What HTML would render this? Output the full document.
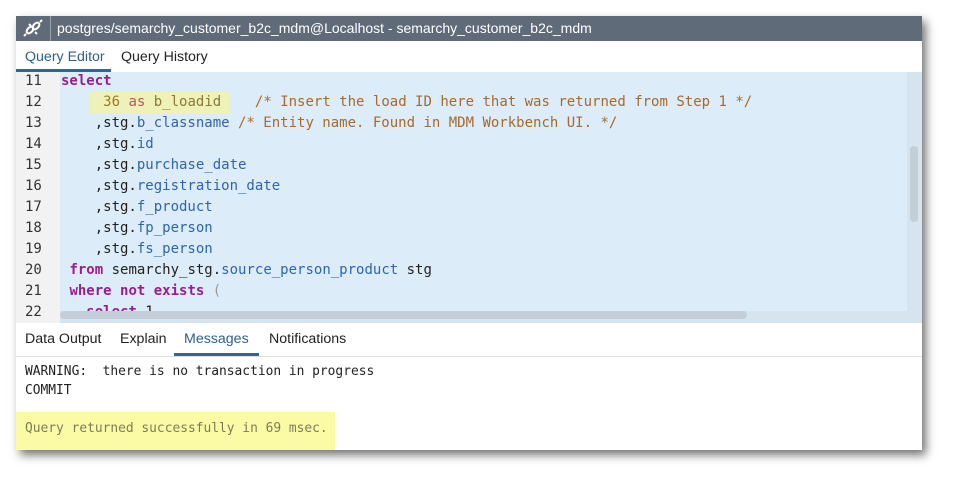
<!DOCTYPE html>
<html><head><meta charset="utf-8"><style>
body{margin:0;width:953px;height:481px;background:#fff;position:relative;overflow:hidden;font-family:"Liberation Sans",sans-serif}
.win{position:absolute;left:16px;top:16px;width:906px;height:434px;background:#fff;box-shadow:4px 5px 9px rgba(0,0,0,.55)}
.title{position:absolute;left:0;top:0;width:906px;height:25px;background:#5f6b79;color:#fff;font-size:14px;line-height:25px}
.title .ic{position:absolute;left:0;top:0;width:34px;height:25px;border-right:1px solid #9aa3ad}
.title span{position:absolute;left:41px}
.tabs{position:absolute;top:25px;left:0;width:906px;height:31px;font-size:14.2px}
.tab{position:absolute;top:8px;color:#222}
.ed{position:absolute;top:56px;left:0;width:906px;height:251px;background:#d6e4f0;overflow:hidden}
.gut{position:absolute;left:0;top:0;width:44px;height:251px;background:#f2f2f2}
.code{position:absolute;left:44px;top:0;width:847px;height:239px;background:#dcecf8}
pre{margin:0;position:absolute;top:0;left:0;font-family:"DejaVu Sans Mono","Liberation Mono",monospace;font-size:14px;line-height:21px;color:#222}
.ln{left:9px;color:#333}
.k{color:#9a1d8f;font-weight:bold}.c{color:#a66a2c}.b{color:#2f65ad}.n{color:#9b7a25}.g{color:#999}
.hl{position:absolute;left:74px;top:75px;width:140px;height:22px;background:#eef2b8}
.vs{position:absolute;left:894px;top:74px;width:8px;height:76px;background:#c3ced9;border-radius:4px}
.hs{position:absolute;left:44px;top:239px;width:687px;height:8px;background:#c3ced9;border-radius:4px}
.bt{position:absolute;top:307px;left:0;width:906px;height:33px;border-bottom:1px solid #ddd;font-size:14.2px}
.msg{position:absolute;top:346px;left:9px;font-family:"DejaVu Sans Mono",monospace;font-size:12.9px;line-height:19px;color:#222;margin:0}
.ok{position:absolute;left:0;top:396px;width:319px;height:38px;background:#fbfba6}
.ok div{position:absolute;left:9px;top:9px;font-family:"DejaVu Sans Mono",monospace;font-size:12.9px;color:#7e7c55}
</style></head><body>
<div class="win">
<div class="title"><div class="ic"><svg width="34" height="25" viewBox="0 0 34 25"><g fill="none" stroke="#fff" stroke-width="2"><ellipse cx="14" cy="14" rx="4" ry="2.5" transform="rotate(-45 14 14)"/><ellipse cx="20" cy="10" rx="4" ry="2.5" transform="rotate(-45 20 10)"/><path d="M10 18l-2 2M24 6l2-2M13 8l2 2M19 16l2 2"/></g></svg></div><span>postgres/semarchy_customer_b2c_mdm@Localhost - semarchy_customer_b2c_mdm</span></div>
<div class="tabs"><div class="tab" style="left:9px;color:#2d5f8f">Query Editor</div><div style="position:absolute;left:0;top:28px;width:95px;height:3px;background:#326690"></div><div class="tab" style="left:105px">Query History</div></div>
<div class="ed"><div class="gut"></div><div class="code"></div><div class="hl" style="top:20px;left:74px"></div>
<pre class="ln" style="top:-1px">11
12
13
14
15
16
17
18
19
20
21
22</pre>
<pre style="left:45px;top:-1px"><span class="k">select</span>
     <span class="n">36</span> <span class="k" style="color:#b0585a;font-weight:normal">as</span> <span style="color:#8a7a3a">b_loadid</span>    <span class="c">/* Insert the load ID here that was returned from Step 1 */</span>
    ,stg.<span class="b">b_classname</span> <span class="c">/* Entity name. Found in MDM Workbench UI. */</span>
    ,stg.<span class="b">id</span>
    ,stg.<span class="b">purchase_date</span>
    ,stg.<span class="b">registration_date</span>
    ,stg.<span class="b">f_product</span>
    ,stg.<span class="b">fp_person</span>
    ,stg.<span class="b">fs_person</span>
 <span class="k">from</span> semarchy_stg.<span class="b">source_person_product</span> stg
 <span class="k">where not exists</span> <span class="g">(</span>
   <span class="k">select</span> 1</pre>
<div class="vs"></div><div class="hs"></div></div>
<div class="bt"><div class="tab" style="left:9px">Data Output</div><div class="tab" style="left:104px">Explain</div><div class="tab" style="left:168px;color:#2d5f8f">Messages</div><div style="position:absolute;left:158px;top:30px;width:85px;height:3px;background:#326690"></div><div class="tab" style="left:253px">Notifications</div></div>
<pre class="msg">WARNING:  there is no transaction in progress
COMMIT</pre>
<div class="ok"><div>Query returned successfully in 69 msec.</div></div>
</div>
</body></html>
